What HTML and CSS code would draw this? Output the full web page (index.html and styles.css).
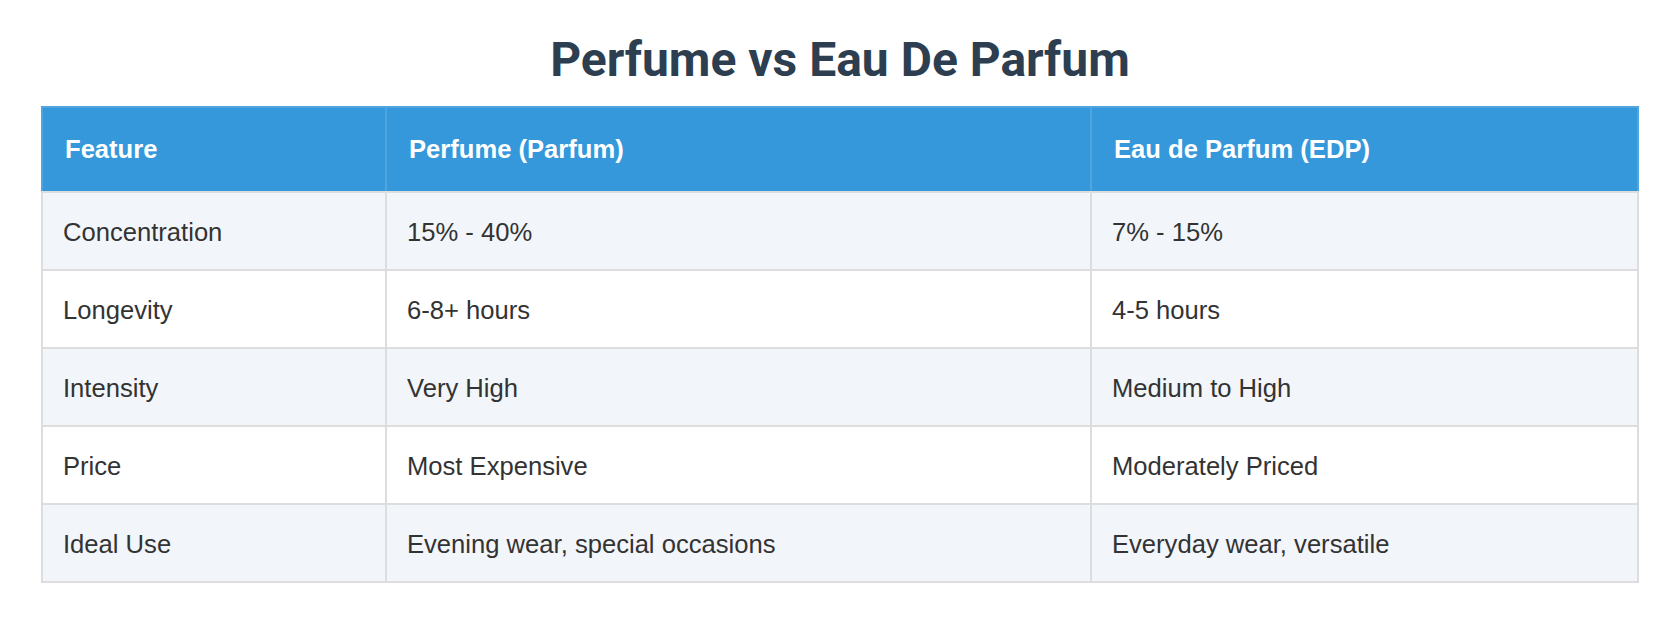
FILE: index.html
```html
<!DOCTYPE html>
<html lang="en">
<head>
<meta charset="utf-8">
<title>Perfume vs Eau De Parfum</title>
<link rel="stylesheet" href="styles.css">
</head>
<body>
<main class="page">
  <h1 class="title">Perfume vs Eau De Parfum</h1>
  <table class="compare">
    <colgroup>
      <col class="col-feature">
      <col class="col-perfume">
      <col class="col-edp">
    </colgroup>
    <thead>
      <tr>
        <th>Feature</th>
        <th>Perfume (Parfum)</th>
        <th>Eau de Parfum (EDP)</th>
      </tr>
    </thead>
    <tbody>
      <tr><td>Concentration</td><td>15% - 40%</td><td>7% - 15%</td></tr>
      <tr><td>Longevity</td><td>6-8+ hours</td><td>4-5 hours</td></tr>
      <tr><td>Intensity</td><td>Very High</td><td>Medium to High</td></tr>
      <tr><td>Price</td><td>Most Expensive</td><td>Moderately Priced</td></tr>
      <tr><td>Ideal Use</td><td>Evening wear, special occasions</td><td>Everyday wear, versatile</td></tr>
    </tbody>
  </table>
</main>
</body>
</html>
```
FILE: styles.css
```css
html, body {
  margin: 0;
  padding: 0;
  background: #ffffff;
}

.page {
  padding: 33px 41px 0 41px;
  font-family: "Liberation Sans", Arial, sans-serif;
  color: #333333;
}

.title {
  margin: 0 0 19px 0;
  text-align: center;
  font-family: Roboto, "Liberation Sans", sans-serif;
  font-weight: 700;
  font-size: 48px;
  line-height: 54px;
  color: #2c3e50;
}

.compare {
  width: 100%;
  border-collapse: collapse;
  table-layout: fixed;
  font-size: 25.6px;
}

.col-feature { width: 344px; }
.col-perfume { width: 705px; }
.col-edp { width: auto; }

.compare th,
.compare td {
  text-align: left;
  vertical-align: middle;
  line-height: 29px;
}

.compare th {
  background: #3498db;
  color: #ffffff;
  font-weight: 700;
  padding: 27px 22px;
  border: 2px solid #4ea5e0;
  border-bottom-color: #dddddd;
}

.compare td {
  padding: 25px 20px 22px 20px;
  border: 2px solid #dddddd;
}

.compare tbody tr:nth-child(odd) td {
  background: #f2f5fa;
}

.compare tbody tr:nth-child(even) td {
  background: #ffffff;
}
```
